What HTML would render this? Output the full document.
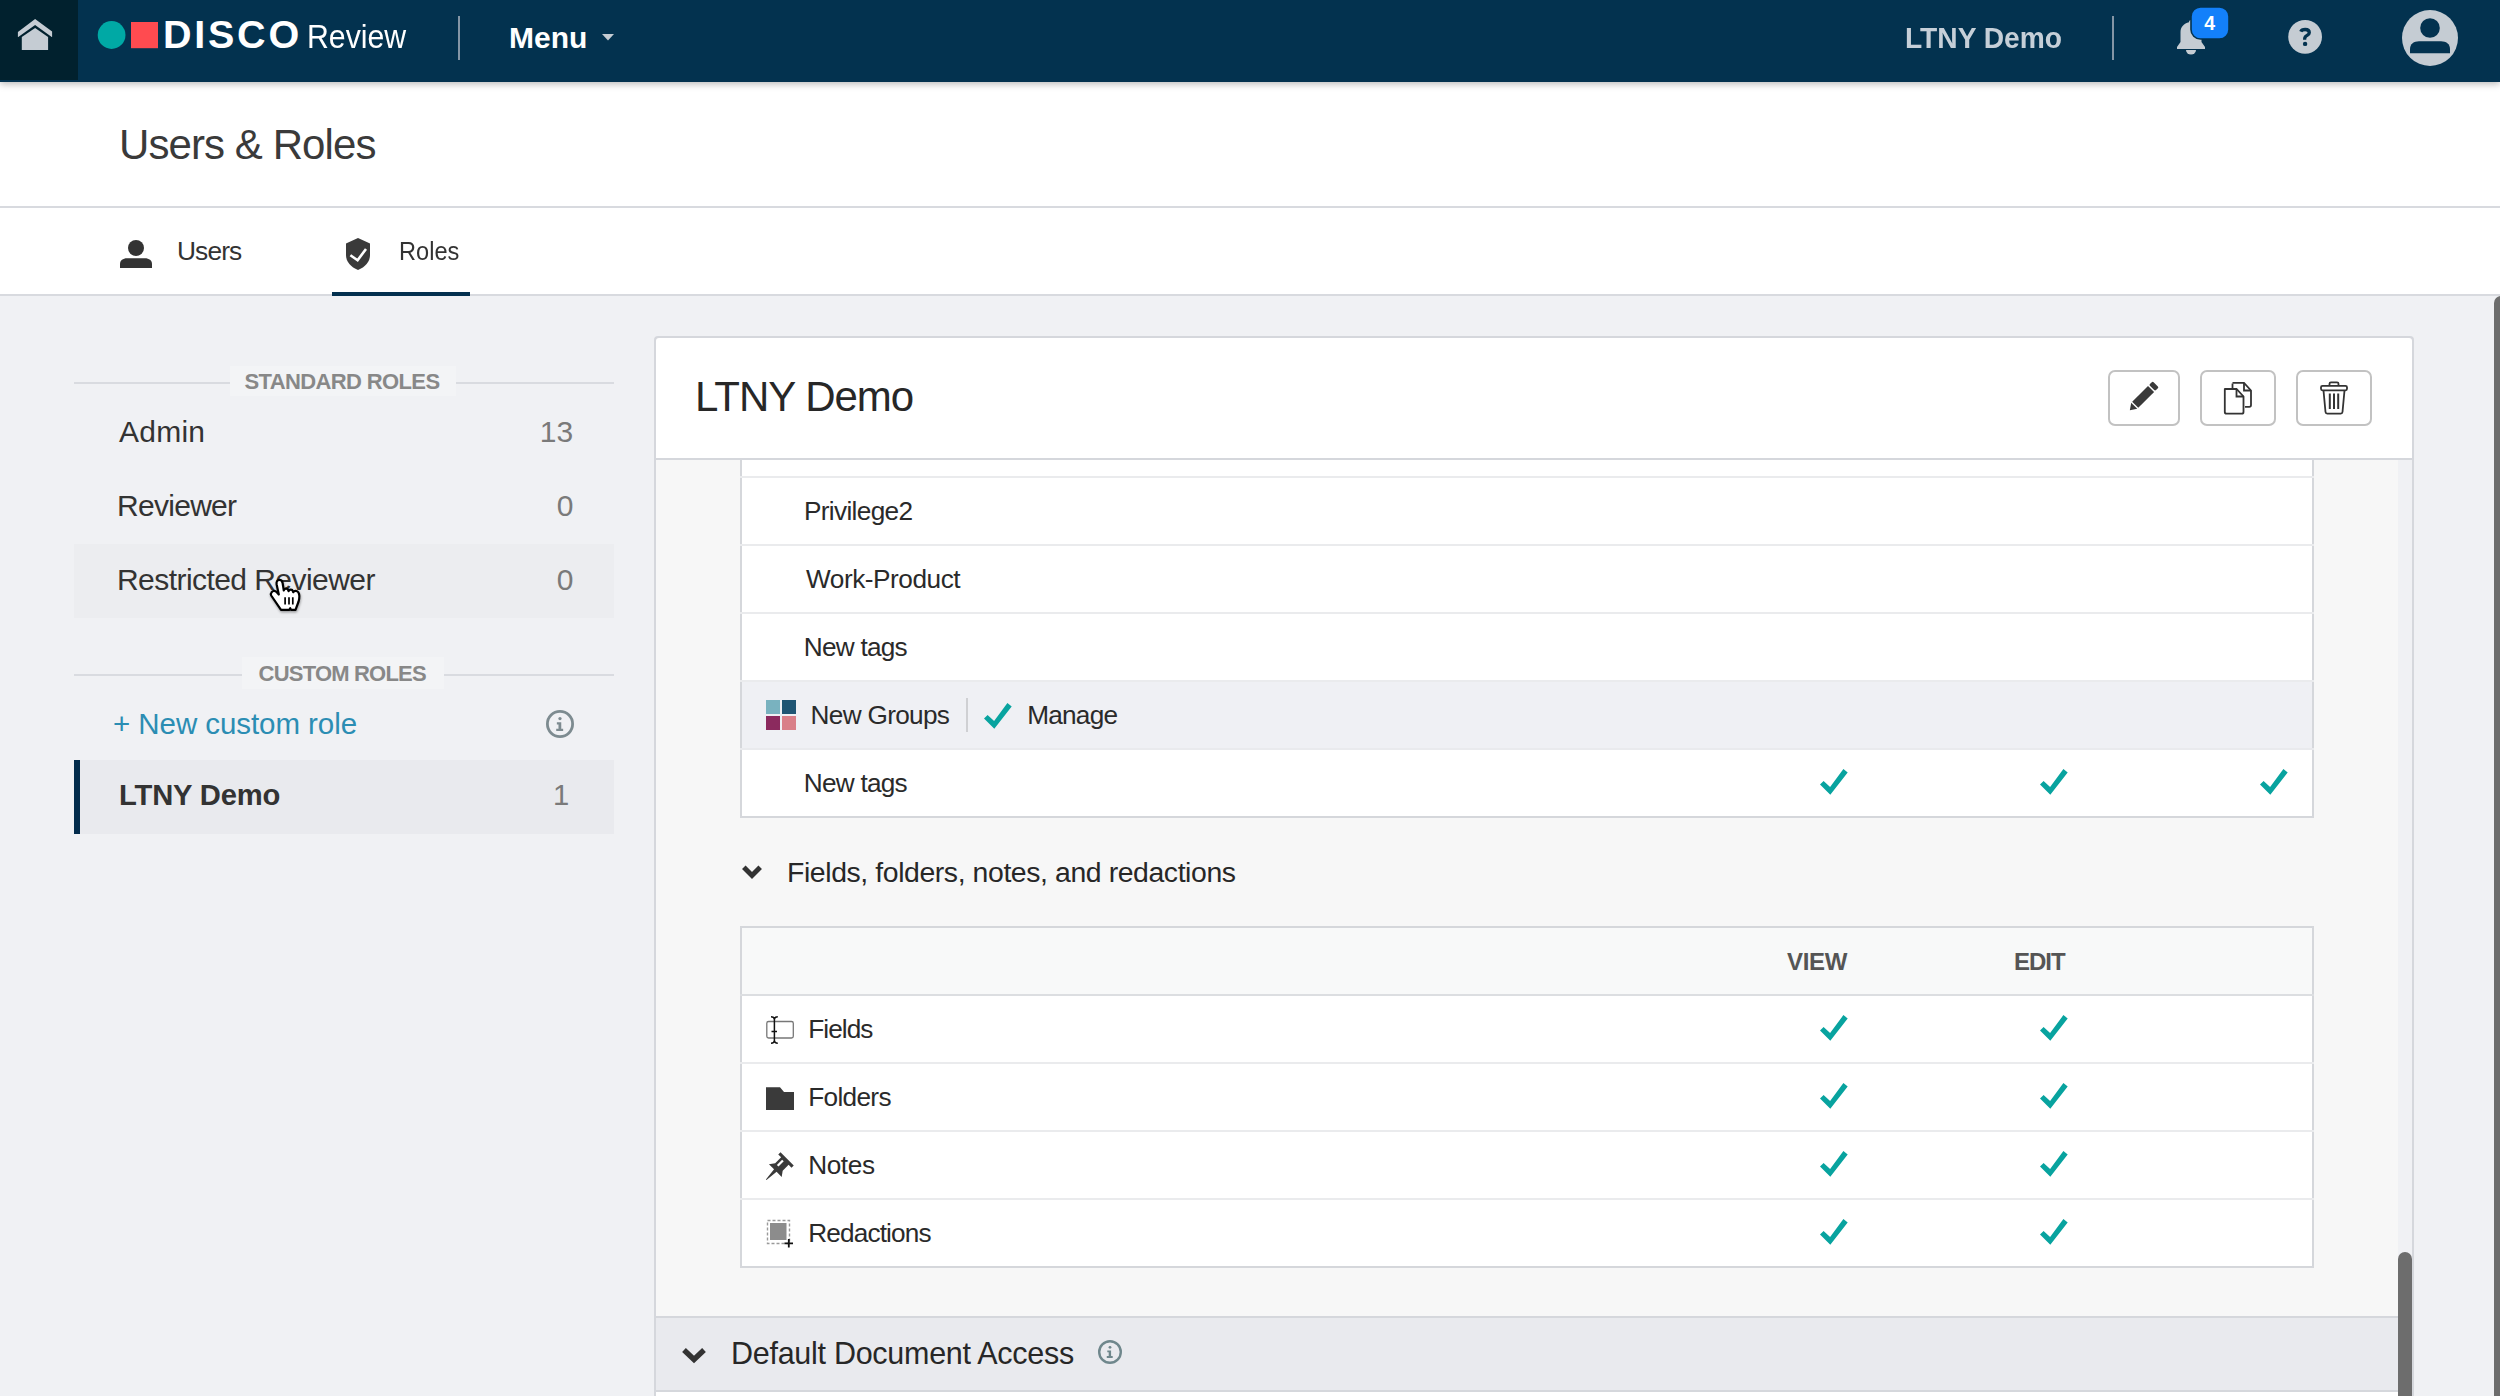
<!DOCTYPE html>
<html><head><meta charset="utf-8"><title>Users &amp; Roles</title>
<style>
html,body{margin:0;padding:0}
body{width:2500px;height:1396px;overflow:hidden;position:relative;background:#f0f1f4;font-family:"Liberation Sans",sans-serif}
div{position:absolute}
span{position:absolute;line-height:1;white-space:pre;z-index:3}
</style></head><body>
<div style="left:0px;top:0px;width:2500px;height:82px;background:#03324f;box-shadow:0 2px 7px rgba(0,0,0,0.28);z-index:1"></div>
<div style="left:0px;top:0px;width:78px;height:80px;background:#01212e;z-index:1"></div>
<div style="left:458px;top:16px;width:2px;height:44px;background:#8495a5;z-index:1"></div>
<div style="left:2112px;top:16px;width:2px;height:44px;background:#8495a5;z-index:1"></div>
<div style="left:0px;top:82px;width:2500px;height:124px;background:#ffffff;"></div>
<div style="left:0px;top:206px;width:2500px;height:2px;background:#d8dadf;"></div>
<div style="left:0px;top:208px;width:2500px;height:86px;background:#ffffff;"></div>
<div style="left:0px;top:294px;width:2500px;height:2px;background:#d8dadf;"></div>
<div style="left:332px;top:292px;width:138px;height:4px;background:#03304f;"></div>
<div style="left:74px;top:382px;width:540px;height:2px;background:#d9dbe0;"></div>
<div style="left:230px;top:366px;width:226px;height:30px;background:#f3f4f6;"></div>
<div style="left:74px;top:544px;width:540px;height:74px;background:#ecedf0;"></div>
<div style="left:74px;top:674px;width:540px;height:2px;background:#d9dbe0;"></div>
<div style="left:242px;top:657px;width:202px;height:32px;background:#f3f4f6;"></div>
<div style="left:74px;top:760px;width:540px;height:74px;background:#e9eaee;"></div>
<div style="left:74px;top:760px;width:6px;height:74px;background:#032c4c;"></div>
<div style="left:654px;top:336px;width:1760px;height:1060px;background:#d5d7dc;border-radius:4px 4px 0 0"></div>
<div style="left:656px;top:338px;width:1756px;height:120px;background:#ffffff;border-radius:3px 3px 0 0"></div>
<div style="left:656px;top:460px;width:1756px;height:936px;background:#f7f7f7;"></div>
<div style="left:2398px;top:460px;width:14px;height:936px;background:#f0f1f4;"></div>
<div style="left:2398px;top:1252px;width:14px;height:168px;background:#6d6d6d;border-radius:7px"></div>
<div style="left:2494px;top:296px;width:14px;height:1124px;background:#6d6d6d;border-radius:7px"></div>
<div style="left:2108px;top:370px;width:72px;height:56px;background:#ffffff;box-sizing:border-box;border:2px solid #c2c2c2;border-radius:7px"></div>
<div style="left:2200px;top:370px;width:76px;height:56px;background:#ffffff;box-sizing:border-box;border:2px solid #c2c2c2;border-radius:7px"></div>
<div style="left:2296px;top:370px;width:76px;height:56px;background:#ffffff;box-sizing:border-box;border:2px solid #c2c2c2;border-radius:7px"></div>
<div style="left:740px;top:460px;width:1574px;height:358px;background:#d5d7db;"></div>
<div style="left:742px;top:460px;width:1570px;height:356px;background:#ffffff;"></div>
<div style="left:740px;top:476px;width:1574px;height:2px;background:#eaebed;"></div>
<div style="left:740px;top:544px;width:1574px;height:2px;background:#eaebed;"></div>
<div style="left:740px;top:612px;width:1574px;height:2px;background:#eaebed;"></div>
<div style="left:740px;top:680px;width:1574px;height:2px;background:#eaebed;"></div>
<div style="left:742px;top:682px;width:1570px;height:67px;background:#eff0f4;"></div>
<div style="left:740px;top:748px;width:1574px;height:2px;background:#e9eaed;"></div>
<div style="left:740px;top:926px;width:1574px;height:342px;background:#d5d7db;"></div>
<div style="left:742px;top:928px;width:1570px;height:66px;background:#f8f9f9;"></div>
<div style="left:740px;top:994px;width:1574px;height:2px;background:#dcdee1;"></div>
<div style="left:742px;top:996px;width:1570px;height:270px;background:#ffffff;"></div>
<div style="left:740px;top:1062px;width:1574px;height:2px;background:#eaebed;"></div>
<div style="left:740px;top:1130px;width:1574px;height:2px;background:#eaebed;"></div>
<div style="left:740px;top:1198px;width:1574px;height:2px;background:#eaebed;"></div>
<div style="left:656px;top:1316px;width:1742px;height:2px;background:#d5d7dc;"></div>
<div style="left:656px;top:1318px;width:1742px;height:72px;background:#e9eaee;"></div>
<div style="left:656px;top:1390px;width:1742px;height:2px;background:#d5d7dc;"></div>
<div style="left:656px;top:1392px;width:1742px;height:4px;background:#ffffff;"></div>
<svg width="2500" height="1396" style="position:absolute;left:0;top:0;z-index:2"><polygon points="17.9,31.9 35.1,19 52.1,31.5 52.1,37.2 35.1,25 17.9,37.2" fill="#c5ccd3"/><polygon points="21.8,36.9 35.1,27.9 48.1,36.9 48.1,50.1 21.8,50.1" fill="#c5ccd3"/><circle cx="111.6" cy="35" r="13.9" fill="#00a9a5"/><rect x="131" y="22" width="27" height="26.2" fill="#ff4b50"/><polygon points="602,34 614,34 608,40.5" fill="#c5ccd3"/><path d="M2191,20 C2189.5,20 2189,21.5 2189,22.3 C2184,23.5 2180.5,27 2180.5,32 L2180.5,42 L2177,47 L2177,49 L2205,49 L2205,47 L2201.5,42 L2201.5,32 C2201.5,27 2198,23.5 2193,22.3 C2193,21.5 2192.5,20 2191,20 Z" fill="#c5ccd3"/><path d="M2186,50 L2196,50 A5,4.5 0 0 1 2186,50 Z" fill="#c5ccd3"/><rect x="2191" y="7" width="38" height="32" rx="9.5" fill="#1380fa" stroke="#03324f" stroke-width="1.6"/><circle cx="2305.1" cy="36.8" r="16.9" fill="#c5ccd3"/><path d="M2300.8,31.6 C2301.5,29.8 2303.2,29.5 2305.2,29.5 C2307.6,29.5 2309.3,30.7 2309.3,32.7 C2309.3,34.9 2306.6,35.3 2305.3,36.9 C2304.8,37.5 2304.6,38.4 2304.6,39.8" fill="none" stroke="#03324f" stroke-width="3.3"/><circle cx="2305.1" cy="43.9" r="2.2" fill="#03324f"/><circle cx="2430" cy="38" r="28" fill="#c5ccd3"/><circle cx="2430" cy="28" r="9.8" fill="#03324f"/><path d="M2410,53.3 L2410,49 C2410,44 2414,41.3 2419,41.3 L2441,41.3 C2446,41.3 2450,44 2450,49 L2450,53.3 Z" fill="#03324f"/><circle cx="136" cy="248" r="8" fill="#333"/><path d="M120,268 L120,264 C120,260.5 123,258.3 127,258.3 L145,258.3 C149,258.3 152,260.5 152,264 L152,268 Z" fill="#333"/><path d="M358,238 L370,243.5 L370,255 C370,262 365,267 358,270 C351,267 346,262 346,255 L346,243.5 Z" fill="#3a3a3a"/><polyline points="350.4,255.2 357.6,260.2 366,249" fill="none" stroke="#fff" stroke-width="2.6"/><circle cx="560" cy="724" r="12.6" fill="none" stroke="#7d8b90" stroke-width="2.8"/><circle cx="560" cy="718.582" r="1.638" fill="#7d8b90"/><path d="M556.85,722.362 L561.26,722.362 L561.26,728.788 L563.15,728.788 L563.15,730.93 L556.22,730.93 L556.22,728.788 L558.488,728.788 L558.488,724.378 L556.85,724.378 Z" fill="#7d8b90"/><circle cx="1110" cy="1352" r="10.8" fill="none" stroke="#6f878c" stroke-width="2.4"/><circle cx="1110" cy="1347.356" r="1.4040000000000001" fill="#6f878c"/><path d="M1107.3,1350.596 L1111.08,1350.596 L1111.08,1356.104 L1112.7,1356.104 L1112.7,1357.94 L1106.76,1357.94 L1106.76,1356.104 L1108.704,1356.104 L1108.704,1352.324 L1107.3,1352.324 Z" fill="#6f878c"/><g transform="translate(2144,396) rotate(-45)"><rect x="-12.4" y="-4.3" width="22.4" height="8.6" fill="#3a3a3a"/><rect x="11.4" y="-4.3" width="5.2" height="8.6" rx="1.3" fill="#3a3a3a"/><polygon points="-13.8,-4.3 -13.8,4.3 -20,0" fill="#3a3a3a"/></g><path d="M2232.5,382.8 L2244,382.8 L2251,390.5 L2251,405 C2251,406 2250.3,406.8 2249.3,406.8 L2245,406.8" fill="#fff" stroke="#333" stroke-width="1.8"/><path d="M2232.5,388.6 L2232.5,383.5" fill="none" stroke="#333" stroke-width="1.8"/><path d="M2244,383 L2244,390.5 L2251,390.5" fill="none" stroke="#333" stroke-width="1.8"/><path d="M2225,389 L2236.5,389 L2243.5,396.5 L2243.5,412 C2243.5,413 2242.8,413.7 2241.8,413.7 L2226.6,413.7 C2225.6,413.7 2224.8,413 2224.8,412 L2224.8,389.2 Z" fill="#fff" stroke="#333" stroke-width="1.8"/><path d="M2236.5,389.3 L2236.5,396.5 L2243.5,396.5" fill="none" stroke="#333" stroke-width="1.8"/><path d="M2329.5,385.8 L2329.5,383.8 C2329.5,382.9 2330.2,382.3 2331,382.3 L2337,382.3 C2337.8,382.3 2338.5,382.9 2338.5,383.8 L2338.5,385.8" fill="none" stroke="#333" stroke-width="1.8"/><rect x="2321" y="385.8" width="26" height="4.5" rx="1.5" fill="none" stroke="#333" stroke-width="1.8"/><path d="M2323.5,390.5 L2325.5,412 C2325.6,413 2326.3,413.6 2327.2,413.6 L2340.8,413.6 C2341.7,413.6 2342.4,413 2342.5,412 L2344.5,390.5" fill="none" stroke="#333" stroke-width="1.8"/><line x1="2329.8" y1="393.5" x2="2329.8" y2="409" stroke="#333" stroke-width="2"/><line x1="2334" y1="393.5" x2="2334" y2="409" stroke="#333" stroke-width="2"/><line x1="2338.2" y1="393.5" x2="2338.2" y2="409" stroke="#333" stroke-width="2"/><rect x="766" y="700" width="14" height="14" fill="#79b2bf"/><rect x="782" y="700" width="14" height="14" fill="#1f5573"/><rect x="766" y="716" width="14" height="14" fill="#8b2a5e"/><rect x="782" y="716" width="14" height="14" fill="#d97f88"/><rect x="966" y="698" width="2" height="34" fill="#cfd0d3"/><polygon points="984.0,718.4 987.6,715.0 994.1,721.0 1007.4,703.1 1011.7,706.4 994.3,728.7" fill="#08a39f"/><polygon points="1820.0,784.4 1823.6,781.0 1830.1,787.0 1843.4,769.1 1847.7,772.4 1830.3,794.7" fill="#08a39f"/><polygon points="2040.0,784.4 2043.6,781.0 2050.1,787.0 2063.4,769.1 2067.7,772.4 2050.3,794.7" fill="#08a39f"/><polygon points="2260.0,784.4 2263.6,781.0 2270.1,787.0 2283.4,769.1 2287.7,772.4 2270.3,794.7" fill="#08a39f"/><polygon points="1820.0,1030.4 1823.6,1027.0 1830.1,1033.0 1843.4,1015.1 1847.7,1018.4 1830.3,1040.7" fill="#08a39f"/><polygon points="2040.0,1030.4 2043.6,1027.0 2050.1,1033.0 2063.4,1015.1 2067.7,1018.4 2050.3,1040.7" fill="#08a39f"/><polygon points="1820.0,1098.4 1823.6,1095.0 1830.1,1101.0 1843.4,1083.1 1847.7,1086.4 1830.3,1108.7" fill="#08a39f"/><polygon points="2040.0,1098.4 2043.6,1095.0 2050.1,1101.0 2063.4,1083.1 2067.7,1086.4 2050.3,1108.7" fill="#08a39f"/><polygon points="1820.0,1166.4 1823.6,1163.0 1830.1,1169.0 1843.4,1151.1 1847.7,1154.4 1830.3,1176.7" fill="#08a39f"/><polygon points="2040.0,1166.4 2043.6,1163.0 2050.1,1169.0 2063.4,1151.1 2067.7,1154.4 2050.3,1176.7" fill="#08a39f"/><polygon points="1820.0,1234.4 1823.6,1231.0 1830.1,1237.0 1843.4,1219.1 1847.7,1222.4 1830.3,1244.7" fill="#08a39f"/><polygon points="2040.0,1234.4 2043.6,1231.0 2050.1,1237.0 2063.4,1219.1 2067.7,1222.4 2050.3,1244.7" fill="#08a39f"/><polyline points="743.8,867.3 752,875.5 760.2,867.3" fill="none" stroke="#333" stroke-width="5"/><polyline points="684,1350 694,1359.5 704,1350" fill="none" stroke="#333" stroke-width="5.4"/><rect x="766.8" y="1021.5" width="26.5" height="16.5" rx="1.8" fill="none" stroke="#777" stroke-width="1.3"/><path d="M771,1016.8 C773,1016.8 774.4,1017.8 774.4,1019.5 L774.4,1040.5 C774.4,1042.2 773,1043.2 771,1043.2 M777.8,1016.8 C775.8,1016.8 774.4,1017.8 774.4,1019.5 M774.4,1040.5 C774.4,1042.2 775.8,1043.2 777.8,1043.2 M771.5,1031.5 L777,1031.5" fill="none" stroke="#111" stroke-width="1.5"/><path d="M766,1087.2 L780,1087.2 L784,1092 L794,1092 L794,1110 L766,1110 Z" fill="#3a3a3a"/><g transform="translate(786,1159.9) rotate(45)"><polygon points="-9.35,-1.6 9.35,-1.6 9.35,1.6 5.3,1.6 5.3,10 9,15.1 1.8,15.1 0.4,28 -0.4,28 -1.8,15.1 -9,15.1 -5.3,10 -5.3,1.6 -9.35,1.6" fill="#3a3a3a"/><rect x="-2.9" y="2.6" width="2.3" height="7.4" fill="#fff"/></g><rect x="767.5" y="1220.5" width="22" height="23" fill="none" stroke="#9a9a9a" stroke-width="1.4" stroke-dasharray="3,2"/><rect x="770" y="1223" width="16.5" height="17" fill="#8c8c8c"/><path d="M788.8,1239 L788.8,1247.6 M784.5,1243.3 L793,1243.3" stroke="#111" stroke-width="1.8"/></svg>
<span style="left:163.00px;top:15.13px;font-size:39.53px;font-weight:bold;color:#ffffff;letter-spacing:2.750px">DISCO</span>
<span style="left:307.33px;top:19.22px;font-size:34.00px;font-weight:normal;color:#ffffff;letter-spacing:0.000px;transform:scaleX(0.8899);transform-origin:0 0">Review</span>
<span style="left:509.00px;top:22.61px;font-size:30.00px;font-weight:bold;color:#ffffff;letter-spacing:0.000px">Menu</span>
<span style="left:1905.12px;top:22.61px;font-size:30.00px;font-weight:bold;color:#c6cfd8;letter-spacing:0.000px;transform:scaleX(0.9390);transform-origin:0 0">LTNY Demo</span>
<span style="left:2204.30px;top:13.89px;font-size:19.50px;font-weight:bold;color:#ffffff;letter-spacing:0.000px">4</span>
<span style="left:119.00px;top:124.05px;font-size:42.00px;font-weight:normal;color:#3a3a3a;letter-spacing:-0.917px">Users &amp; Roles</span>
<span style="left:177.00px;top:238.24px;font-size:26.30px;font-weight:normal;color:#333333;letter-spacing:-0.875px">Users</span>
<span style="left:399.45px;top:238.24px;font-size:26.30px;font-weight:normal;color:#333333;letter-spacing:0.000px;transform:scaleX(0.8969);transform-origin:0 0">Roles</span>
<span style="left:244.40px;top:371.38px;font-size:22.00px;font-weight:bold;color:#888888;letter-spacing:-0.615px">STANDARD ROLES</span>
<span style="left:119.00px;top:417.11px;font-size:30.00px;font-weight:normal;color:#333333;letter-spacing:0.250px">Admin</span>
<span style="left:539.80px;top:417.11px;font-size:30.00px;font-weight:normal;color:#7a7a7a;letter-spacing:0.000px">13</span>
<span style="left:117.00px;top:490.61px;font-size:30.00px;font-weight:normal;color:#333333;letter-spacing:-0.714px">Reviewer</span>
<span style="left:556.70px;top:490.61px;font-size:30.00px;font-weight:normal;color:#7a7a7a;letter-spacing:0.000px">0</span>
<span style="left:117.00px;top:564.61px;font-size:30.00px;font-weight:normal;color:#333333;letter-spacing:-0.556px">Restricted Reviewer</span>
<span style="left:556.70px;top:564.61px;font-size:30.00px;font-weight:normal;color:#7a7a7a;letter-spacing:0.000px">0</span>
<span style="left:258.60px;top:663.38px;font-size:22.00px;font-weight:bold;color:#888888;letter-spacing:-0.800px">CUSTOM ROLES</span>
<span style="left:113.00px;top:709.03px;font-size:29.50px;font-weight:normal;color:#2b8db3;letter-spacing:-0.062px">+ New custom role</span>
<span style="left:119.00px;top:781.28px;font-size:29.20px;font-weight:bold;color:#333333;letter-spacing:-0.175px">LTNY Demo</span>
<span style="left:553.00px;top:780.78px;font-size:29.20px;font-weight:normal;color:#7a7a7a;letter-spacing:0.000px">1</span>
<span style="left:695.00px;top:376.45px;font-size:42.00px;font-weight:normal;color:#272727;letter-spacing:-1.000px">LTNY Demo</span>
<span style="left:804.00px;top:498.12px;font-size:26.20px;font-weight:normal;color:#2a2a2a;letter-spacing:-0.667px">Privilege2</span>
<span style="left:806.00px;top:566.32px;font-size:26.20px;font-weight:normal;color:#2a2a2a;letter-spacing:-0.455px">Work-Product</span>
<span style="left:803.80px;top:634.32px;font-size:26.20px;font-weight:normal;color:#2a2a2a;letter-spacing:-0.771px">New tags</span>
<span style="left:810.60px;top:702.32px;font-size:26.20px;font-weight:normal;color:#2a2a2a;letter-spacing:-0.700px">New Groups</span>
<span style="left:1027.20px;top:702.32px;font-size:26.20px;font-weight:normal;color:#2a2a2a;letter-spacing:-0.760px">Manage</span>
<span style="left:803.80px;top:770.32px;font-size:26.20px;font-weight:normal;color:#2a2a2a;letter-spacing:-0.771px">New tags</span>
<span style="left:787.00px;top:857.96px;font-size:28.40px;font-weight:normal;color:#272727;letter-spacing:-0.405px">Fields, folders, notes, and redactions</span>
<span style="left:1787.00px;top:949.68px;font-size:24.00px;font-weight:bold;color:#555555;letter-spacing:-0.333px">VIEW</span>
<span style="left:2014.00px;top:949.68px;font-size:24.00px;font-weight:bold;color:#555555;letter-spacing:-1.000px">EDIT</span>
<span style="left:808.20px;top:1016.02px;font-size:26.20px;font-weight:normal;color:#2a2a2a;letter-spacing:-0.920px">Fields</span>
<span style="left:808.20px;top:1084.02px;font-size:26.20px;font-weight:normal;color:#2a2a2a;letter-spacing:-0.667px">Folders</span>
<span style="left:808.20px;top:1152.02px;font-size:26.20px;font-weight:normal;color:#2a2a2a;letter-spacing:-0.400px">Notes</span>
<span style="left:808.20px;top:1220.02px;font-size:26.20px;font-weight:normal;color:#2a2a2a;letter-spacing:-0.844px">Redactions</span>
<span style="left:731.00px;top:1338.18px;font-size:30.50px;font-weight:normal;color:#272727;letter-spacing:-0.273px">Default Document Access</span>
<svg width="2500" height="1396" style="position:absolute;left:0;top:0;z-index:5"><defs><filter id="cs" x="-30%" y="-30%" width="160%" height="160%"><feDropShadow dx="0.5" dy="1.5" stdDeviation="1.2" flood-color="#000" flood-opacity="0.35"/></filter></defs><path filter="url(#cs)" d="M271.5,592.5 C272.5,590.5 275,590.3 276.8,592.2 L278.8,594.5 L276.6,584.2 C276.2,581.5 277.5,579.8 279.3,579.8 C281,579.8 282.3,581 282.6,583 L283.8,590.5 C284.3,588.5 287.3,587.8 288.3,590.3 L288.6,591.2 C289.3,589.3 292.2,589 292.9,591.3 L293.2,592.2 C294,590.3 297.3,590.3 298.5,592.6 C299.6,594.5 299.5,598 298.6,601.5 L295.5,609.8 L291,609.8 L290.2,608.2 L289.4,609.8 L281,609.8 L271.2,595.5 C270.6,594.5 270.8,593.3 271.5,592.5 Z" fill="#fff" stroke="#000" stroke-width="2.2" stroke-linejoin="round"/><path d="M285.1,597.2 L285.1,604.5 M289,597.2 L289,604.5 M292.8,597.2 L292.8,604.5" stroke="#000" stroke-width="1.7"/></svg>
</body></html>
